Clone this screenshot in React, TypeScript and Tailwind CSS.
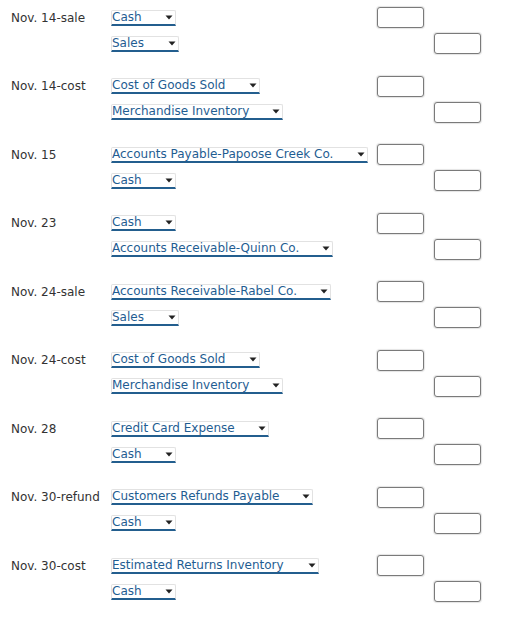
import React from 'react';

type Entry = {
  date: string;
  debit: { account: string; width: number };
  credit: { account: string; width: number };
};

const entries: Entry[] = [
  { date: 'Nov. 14-sale', debit: { account: 'Cash', width: 65 }, credit: { account: 'Sales', width: 68 } },
  { date: 'Nov. 14-cost', debit: { account: 'Cost of Goods Sold', width: 149 }, credit: { account: 'Merchandise Inventory', width: 172 } },
  { date: 'Nov. 15', debit: { account: 'Accounts Payable-Papoose Creek Co.', width: 257 }, credit: { account: 'Cash', width: 65 } },
  { date: 'Nov. 23', debit: { account: 'Cash', width: 65 }, credit: { account: 'Accounts Receivable-Quinn Co.', width: 222 } },
  { date: 'Nov. 24-sale', debit: { account: 'Accounts Receivable-Rabel Co.', width: 220 }, credit: { account: 'Sales', width: 68 } },
  { date: 'Nov. 24-cost', debit: { account: 'Cost of Goods Sold', width: 149 }, credit: { account: 'Merchandise Inventory', width: 172 } },
  { date: 'Nov. 28', debit: { account: 'Credit Card Expense', width: 158 }, credit: { account: 'Cash', width: 65 } },
  { date: 'Nov. 30-refund', debit: { account: 'Customers Refunds Payable', width: 202 }, credit: { account: 'Cash', width: 65 } },
  { date: 'Nov. 30-cost', debit: { account: 'Estimated Returns Inventory', width: 208 }, credit: { account: 'Cash', width: 65 } },
];

const AccountSelect = ({ account, width }: { account: string; width: number }) => (
  <div
    className="relative flex items-center h-[16px] bg-white border border-[#e2e2e2] border-b-2 border-b-[#235e8e] rounded-t-[2px] text-[#1f5d92] text-[12px] leading-[13px] whitespace-nowrap overflow-hidden"
    style={{ width }}
  >
    <span>{account}</span>
    <svg className="absolute right-[2px] top-[4px]" width="8" height="5" viewBox="0 0 8 5">
      <path d="M0.5 0.5 L7.5 0.5 L4 4.5 Z" fill="#222" />
    </svg>
  </div>
);

const AmountBox = () => (
  <input
    type="text"
    className="w-[47px] h-[21px] bg-white border border-[#7a7a7a] rounded-[3px] shadow-[0_0_1px_1px_#e4e4e4] outline-none"
  />
);

const Row = ({
  label,
  account,
  width,
  side,
}: {
  label?: string;
  account: string;
  width: number;
  side: 'debit' | 'credit';
}) => (
  <div className="flex items-center h-[26px]">
    <div className="w-[100px] text-[#333333] text-[12px] whitespace-nowrap">{label}</div>
    <div className="w-[266px] flex items-center">
      <AccountSelect account={account} width={width} />
    </div>
    <div className="w-[57px]">{side === 'debit' && <AmountBox />}</div>
    <div className="w-[47px]">{side === 'credit' && <AmountBox />}</div>
  </div>
);

export default function App() {
  return (
    <div
      className="min-h-screen bg-white pl-[11px] pt-[4.5px]"
      style={{ fontFamily: '"DejaVu Sans", Verdana, sans-serif' }}
    >
      {entries.map((e) => (
        <div key={e.date} className="mb-[16.5px]">
          <Row label={e.date} account={e.debit.account} width={e.debit.width} side="debit" />
          <Row account={e.credit.account} width={e.credit.width} side="credit" />
        </div>
      ))}
    </div>
  );
}
